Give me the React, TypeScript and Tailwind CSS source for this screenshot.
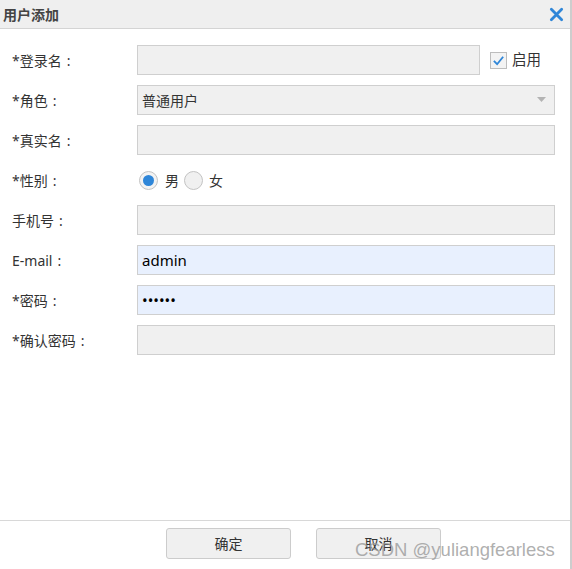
import React from 'react';

const font = { fontFamily: '"Noto Sans", "Noto Sans CJK SC", sans-serif' };

function Field({ label, children }: { label: string; children: React.ReactNode }) {
  return (
    <div className="flex items-center h-[30px]">
      <div className="w-[137px] pl-[12px] text-[14px] text-[#333] flex items-center">
        <span>{label}</span>
        <span className="ml-[5px]">:</span>
      </div>
      {children}
    </div>
  );
}

function TextBox({ value, blue, className = 'w-[418px]' }: { value?: string; blue?: boolean; className?: string }) {
  return (
    <div
      className={`${className} h-[30px] border border-[#cfcfcf] flex items-center px-[4px] text-[15px] text-black ${
        blue ? 'bg-[#e8f0fe]' : 'bg-[#f0f0f0]'
      }`}
    >
      {value}
    </div>
  );
}

export default function App() {
  return (
    <div className="w-[572px] h-[569px] bg-white relative flex flex-col border-r-2 border-[#cdcdcd]" style={font}>
      {/* title bar */}
      <div className="h-[29px] bg-[#efefef] border-b border-[#d4d4d4] flex items-center justify-between pl-[3px] pr-[6px]">
        <span className="text-[14px] font-bold text-[#444]">用户添加</span>
        <svg width="15" height="15" viewBox="0 0 16 16">
          <path d="M2.5 2.5 L13.5 13.5 M13.5 2.5 L2.5 13.5" stroke="#2f86d8" strokeWidth="3" strokeLinecap="round" />
        </svg>
      </div>

      {/* form */}
      <div className="flex-1 flex flex-col gap-[10px] pt-[16px]">
        <Field label="*登录名">
          <TextBox className="w-[343px]" />
          <div className="flex items-center ml-[10px] gap-[5px]">
            <div className="w-[17px] h-[17px] border border-[#bdbdbd] bg-[#f3f3f3] flex items-center justify-center">
              <svg width="13" height="13" viewBox="0 0 14 14">
                <path d="M2 7.5 L5.5 11 L12 3" fill="none" stroke="#2f86d8" strokeWidth="2" />
              </svg>
            </div>
            <span className="text-[14.5px] text-[#333]">启用</span>
          </div>
        </Field>
        <Field label="*角色">
          <div className="w-[418px] h-[30px] border border-[#cfcfcf] bg-[#f0f0f0] flex items-center justify-between pl-[4px] pr-[8px] text-[14px] text-[#333]">
            <span>普通用户</span>
            <svg width="9" height="6" viewBox="0 0 9 6">
              <path d="M0 0 H9 L4.5 5 Z" fill="#b3b3b3" />
            </svg>
          </div>
        </Field>
        <Field label="*真实名">
          <TextBox />
        </Field>
        <Field label="*性别">
          <div className="flex items-center text-[14px] text-[#333]">
            <div className="w-[19px] h-[19px] rounded-full border border-[#c3c3c3] bg-[#f3f3f3] flex items-center justify-center ml-[2px]">
              <div className="w-[11px] h-[11px] rounded-full bg-[#2f86d8]" />
            </div>
            <span className="ml-[7px]">男</span>
            <div className="w-[19px] h-[19px] rounded-full border border-[#c3c3c3] bg-[#f0f0f0] ml-[5px]" />
            <span className="ml-[6px]">女</span>
          </div>
        </Field>
        <Field label="手机号">
          <TextBox />
        </Field>
        <Field label="E-mail">
          <TextBox value="admin" blue />
        </Field>
        <Field label="*密码">
          <TextBox value="••••••" blue />
        </Field>
        <Field label="*确认密码">
          <TextBox />
        </Field>
      </div>

      {/* footer */}
      <div className="h-[49px] border-t border-[#d8d8d8] flex items-start pt-[7px] pl-[166px] gap-[25px]">
        <button className="w-[125px] h-[31px] border border-[#cccccc] rounded-[3px] bg-[#f0f0f0] text-[14px] text-[#333]">确定</button>
        <button className="w-[125px] h-[31px] border border-[#cccccc] rounded-[3px] bg-[#f0f0f0] text-[14px] text-[#333]">取消</button>
      </div>

      <span
        className="absolute left-[355px] top-[536px] text-[18.5px] text-[#9a9a9a]/80 pointer-events-none"
        style={{ fontFamily: '"Liberation Sans", Arial, sans-serif' }}
      >
        CSDN @yuliangfearless
      </span>
    </div>
  );
}
